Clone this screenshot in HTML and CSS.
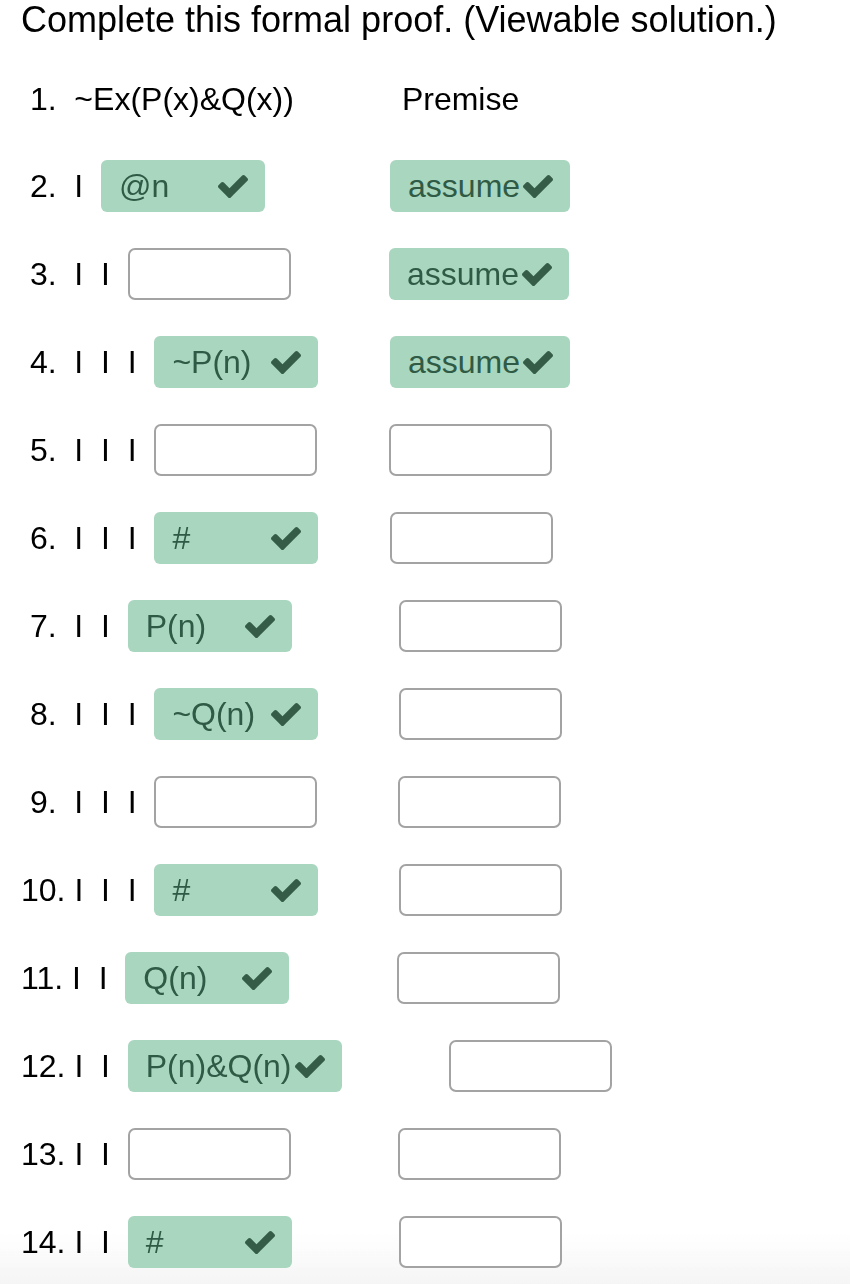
FILE: index.html
```html
<!DOCTYPE html>
<html lang="en">
<head>
<meta charset="utf-8">
<title>Formal proof</title>
<link rel="stylesheet" href="styles.css">
</head>
<body>
<svg width="0" height="0" class="defs" aria-hidden="true">
  <symbol id="chk" viewBox="121 334 1550 1188">
    <path d="M1671 566q0 40-28 68l-724 724-136 136q-28 28-68 28t-68-28l-136-136-362-362q-28-28-28-68t28-68l136-136q28-28 68-28t68 28l294 295 656-657q28-28 68-28t68 28l136 136q28 28 28 68z"/>
  </symbol>
</svg>
<div class="fade" aria-hidden="true"></div>
<div class="page">
  <h1 class="title">Complete this formal proof. (Viewable solution.)</h1>

  <div class="proof">
    <div class="row row-first">
      <span class="prefix"> 1.  </span><span class="formula">~Ex(P(x)&amp;Q(x))</span><span class="just-text">Premise</span>
    </div>

    <div class="row">
      <span class="prefix"> 2.  I  </span><span class="slot pad-a1"><span class="chip"><span>@n</span><svg class="check"><use href="#chk"/></svg></span></span><span class="chip"><span>assume</span><svg class="check"><use href="#chk"/></svg></span>
    </div>

    <div class="row">
      <span class="prefix"> 3.  I  I  </span><span class="slot pad-a2"><span class="field"></span></span><span class="chip"><span>assume</span><svg class="check"><use href="#chk"/></svg></span>
    </div>

    <div class="row">
      <span class="prefix"> 4.  I  I  I  </span><span class="slot pad-a3"><span class="chip"><span>~P(n)</span><svg class="check"><use href="#chk"/></svg></span></span><span class="chip"><span>assume</span><svg class="check"><use href="#chk"/></svg></span>
    </div>

    <div class="row">
      <span class="prefix"> 5.  I  I  I  </span><span class="slot pad-a3"><span class="field"></span></span><span class="field field-just"></span>
    </div>

    <div class="row">
      <span class="prefix"> 6.  I  I  I  </span><span class="slot pad-a3"><span class="chip"><span>#</span><svg class="check"><use href="#chk"/></svg></span></span><span class="field field-just"></span>
    </div>

    <div class="row">
      <span class="prefix"> 7.  I  I  </span><span class="slot pad-b2"><span class="chip"><span>P(n)</span><svg class="check"><use href="#chk"/></svg></span></span><span class="field field-just"></span>
    </div>

    <div class="row">
      <span class="prefix"> 8.  I  I  I  </span><span class="slot pad-b3"><span class="chip"><span>~Q(n)</span><svg class="check"><use href="#chk"/></svg></span></span><span class="field field-just"></span>
    </div>

    <div class="row">
      <span class="prefix"> 9.  I  I  I  </span><span class="slot pad-b3"><span class="field"></span></span><span class="field field-just"></span>
    </div>

    <div class="row">
      <span class="prefix">10. I  I  I  </span><span class="slot pad-b3"><span class="chip"><span>#</span><svg class="check"><use href="#chk"/></svg></span></span><span class="field field-just"></span>
    </div>

    <div class="row">
      <span class="prefix">11. I  I  </span><span class="slot pad-b2"><span class="chip"><span>Q(n)</span><svg class="check"><use href="#chk"/></svg></span></span><span class="field field-just"></span>
    </div>

    <div class="row">
      <span class="prefix">12. I  I  </span><span class="slot pad-b2"><span class="chip"><span>P(n)&amp;Q(n)</span><svg class="check"><use href="#chk"/></svg></span></span><span class="field field-just"></span>
    </div>

    <div class="row">
      <span class="prefix">13. I  I  </span><span class="slot pad-b2"><span class="field"></span></span><span class="field field-just"></span>
    </div>

    <div class="row">
      <span class="prefix">14. I  I  </span><span class="slot pad-b2"><span class="chip"><span>#</span><svg class="check"><use href="#chk"/></svg></span></span><span class="field field-just"></span>
    </div>
  </div>
</div>
</body>
</html>
```

FILE: styles.css
```css
html {
  margin: 0;
  padding: 0;
  background: #ffffff;
}

body {
  margin: 0;
  padding: 0;
  font-family: "Liberation Sans", Arial, Helvetica, sans-serif;
  color: #000000;
}

.defs {
  position: absolute;
  width: 0;
  height: 0;
  overflow: hidden;
}

.page {
  padding: 0 0 0 21px;
}

.title {
  margin: 0;
  font-size: 36px;
  font-weight: normal;
  line-height: 40px;
  letter-spacing: 0;
}

.proof {
  margin-top: 33px;
  display: flex;
  flex-direction: column;
  gap: 36px;
}

.row {
  display: flex;
  align-items: center;
  height: 52px;
  font-size: 32px;
  line-height: 52px;
  white-space: pre;
}

.row-first {
  margin-bottom: -1px;
}

.prefix {
  white-space: pre;
}

.formula {
  margin-right: 108px;
}

.slot {
  display: flex;
  align-items: center;
}

.pad-a1 { margin-right: 125px; }
.pad-a2 { margin-right: 98.3px; }
.pad-a3 { margin-right: 71.6px; }
.pad-b2 { margin-right: 107.3px; }
.pad-b3 { margin-right: 80.6px; }

.chip {
  display: inline-flex;
  align-items: center;
  justify-content: space-between;
  gap: 3px;
  box-sizing: border-box;
  min-width: 164px;
  height: 52px;
  padding: 0 17px 0 18px;
  border-radius: 6px;
  background: #a9d6bf;
  color: #2f5a45;
}

.check {
  width: 30px;
  height: 23px;
  fill: #355c47;
  flex: none;
}

.field {
  display: inline-block;
  box-sizing: border-box;
  width: 163px;
  height: 52px;
  border: 2px solid #a3a3a3;
  border-radius: 7px;
  background: #ffffff;
}

.fade {
  position: fixed;
  left: 0;
  right: 0;
  bottom: 0;
  height: 50px;
  z-index: -1;
  background: linear-gradient(to bottom, rgba(238, 238, 238, 0), rgba(238, 238, 238, 0.6));
  pointer-events: none;
}
```
